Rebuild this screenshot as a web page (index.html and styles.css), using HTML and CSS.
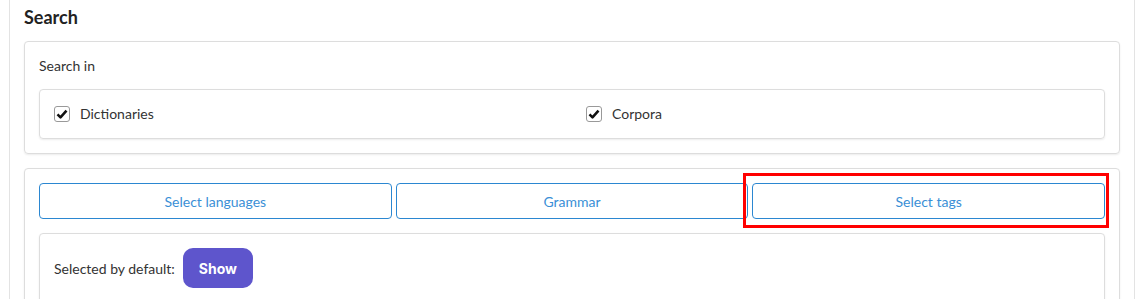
FILE: index.html
```html
<!DOCTYPE html>
<html lang="en">
<head>
    <meta charset="UTF-8">
    <meta name="viewport" content="width=device-width, initial-scale=1.0">
    <title>Search</title>
    <link rel="stylesheet" href="styles.css">
</head>
<body>
    <div class="panel">
        <h2>Search</h2>

        <div class="card">
            <div class="card-title">Search in</div>
            <div class="box options">
                <label class="option">
                    <span class="check">
                        <svg viewBox="0 0 16 16" width="12" height="12"><path d="M2 8.5 L6 12.5 L14 3.5" fill="none" stroke="#111" stroke-width="3.4" stroke-linejoin="round"/></svg>
                    </span>
                    Dictionaries
                </label>
                <label class="option">
                    <span class="check">
                        <svg viewBox="0 0 16 16" width="12" height="12"><path d="M2 8.5 L6 12.5 L14 3.5" fill="none" stroke="#111" stroke-width="3.4" stroke-linejoin="round"/></svg>
                    </span>
                    Corpora
                </label>
            </div>
        </div>

        <div class="card">
            <div class="tabs">
                <button class="tab">Select languages</button>
                <button class="tab">Grammar</button>
                <div class="tab-wrap">
                    <button class="tab">Select tags</button>
                    <span class="highlight"></span>
                </div>
            </div>
            <div class="box defaults">
                <span>Selected by default:</span>
                <button class="show">Show</button>
            </div>
        </div>
    </div>
</body>
</html>
```

FILE: styles.css
```css
body {
    font-family: Lato, "Open Sans", sans-serif;
    font-size: 14px;
    color: #333;
    background: #fff;
    margin: 0;
    padding: 0 9px;
    overflow: hidden;
}
.panel {
    border: 1px solid #e3e3e3;
    border-top: none;
    padding: 0 14px 14px;
    width: 1096px;
}
h2 {
    font-size: 18px;
    font-weight: 700;
    margin: 0;
    padding: 6px 0 0;
    line-height: 22px;
    height: 35px;
    color: #222;
}
.card {
    border: 1px solid #ddd;
    border-radius: 4px;
    box-shadow: 0 1px 2px rgba(0, 0, 0, 0.08);
    padding: 14px;
    margin-bottom: 14px;
}
.card-title {
    line-height: 20px;
    margin-bottom: 13px;
}
.box {
    border: 1px solid #ddd;
    border-radius: 4px;
    box-shadow: 0 1px 2px rgba(0, 0, 0, 0.08);
}
.options {
    display: grid;
    grid-template-columns: 1fr 1fr;
}
.option {
    display: flex;
    align-items: center;
    gap: 10px;
    padding: 14px;
    line-height: 20px;
}
.check {
    width: 14px;
    height: 14px;
    border: 1px solid #999;
    border-radius: 3px;
    display: flex;
    align-items: center;
    justify-content: center;
}
.tabs {
    display: grid;
    grid-template-columns: 1fr 1fr 1fr;
    gap: 4px;
    margin-bottom: 14px;
}
.tab {
    width: 100%;
    height: 36px;
    background: #fff;
    border: 1px solid #2b87d1;
    border-radius: 4px;
    color: #3a8fd6;
    font-family: Lato, sans-serif;
    font-size: 14px;
    cursor: pointer;
}
.tab-wrap {
    position: relative;
}
.highlight {
    position: absolute;
    left: -9px;
    right: -4px;
    top: -10px;
    bottom: -9px;
    border: 3px solid #f00;
}
.defaults {
    display: flex;
    align-items: center;
    gap: 8px;
    padding: 14px;
    height: 40px;
}
.show {
    background: #5e55cc;
    color: #fff;
    border: none;
    border-radius: 10px;
    height: 40px;
    width: 70px;
    font-family: Inter, sans-serif;
    font-weight: 700;
    font-size: 14px;
    cursor: pointer;
}
```
